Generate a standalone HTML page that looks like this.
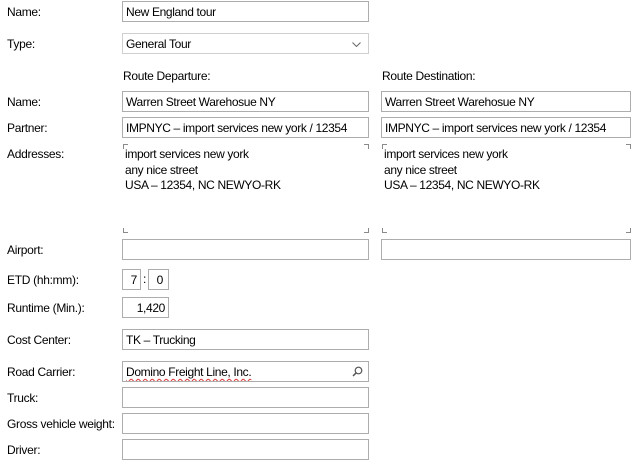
<!DOCTYPE html>
<html><head><meta charset="utf-8"><style>
html,body{margin:0;padding:0;background:#fff;width:640px;height:466px;overflow:hidden;font-family:"Liberation Sans",sans-serif;font-size:12px;color:#000}
.l{position:absolute;left:7px;font-size:12px;letter-spacing:-0.3px}
.i{position:absolute;box-sizing:border-box;border:1px solid #adadad;background:#fff;height:21px;padding:3px 3px 0 3px;font-size:12px;white-space:nowrap;overflow:hidden;letter-spacing:-0.35px}
.a{position:absolute;box-sizing:border-box;height:93px;font-size:12px;line-height:15.5px;padding:4px 3px;letter-spacing:-0.35px}
.c{position:absolute;width:4px;height:4px;border-color:#8a8a8a;border-style:solid;border-width:0}
.h{position:absolute;font-size:12px;letter-spacing:-0.3px}
</style></head><body>
<div class="l" style="top:5px">Name:</div>
<div class="i" style="left:122px;top:1px;width:247px">New England tour</div>
<div class="l" style="top:37px">Type:</div>
<div class="i" style="left:122px;top:33px;width:247px;background:#fff;border-color:#cfcfcf">General Tour<svg style="position:absolute;right:7px;top:8px" width="9" height="5"><path d="M0.5 0.5L4.5 4.5L8.5 0.5" fill="none" stroke="#666" stroke-width="1"/></svg></div>
<div class="h" style="left:123px;top:69px">Route Departure:</div>
<div class="h" style="left:382px;top:69px">Route Destination:</div>
<div class="l" style="top:95px">Name:</div>
<div class="i" style="left:122px;top:91px;width:247px">Warren Street Warehosue NY</div>
<div class="i" style="left:381px;top:91px;width:250px">Warren Street Warehosue NY</div>
<div class="l" style="top:121px">Partner:</div>
<div class="i" style="left:122px;top:117px;width:247px">IMPNYC – import services new york / 12354</div>
<div class="i" style="left:381px;top:117px;width:250px">IMPNYC – import services new york / 12354</div>
<div class="l" style="top:147px">Addresses:</div>
<div class="a" style="left:122px;top:143px;width:247px">import services new york<br>any nice street<br>USA – 12354, NC NEWYO-RK</div>
<div class="a" style="left:381px;top:143px;width:250px">import services new york<br>any nice street<br>USA – 12354, NC NEWYO-RK</div>
<div class="c" style="left:123px;top:144px;border-left-width:1px;border-top-width:1px"></div>
<div class="c" style="left:364px;top:144px;border-right-width:1px;border-top-width:1px"></div>
<div class="c" style="left:123px;top:228px;border-left-width:1px;border-bottom-width:1px"></div>
<div class="c" style="left:364px;top:228px;border-right-width:1px;border-bottom-width:1px"></div>
<div class="c" style="left:382px;top:144px;border-left-width:1px;border-top-width:1px"></div>
<div class="c" style="left:626px;top:144px;border-right-width:1px;border-top-width:1px"></div>
<div class="c" style="left:382px;top:228px;border-left-width:1px;border-bottom-width:1px"></div>
<div class="c" style="left:626px;top:228px;border-right-width:1px;border-bottom-width:1px"></div>
<div class="l" style="top:243px">Airport:</div>
<div class="i" style="left:122px;top:239px;width:247px"></div>
<div class="i" style="left:381px;top:239px;width:250px"></div>
<div class="l" style="top:273px">ETD (hh:mm):</div>
<div class="i" style="left:122px;top:269px;width:19px;text-align:right">7</div>
<div style="position:absolute;left:143px;top:272px;font-size:12px">:</div>
<div class="i" style="left:148px;top:269px;width:21px;text-align:right;padding-right:5px">0</div>
<div class="l" style="top:301px">Runtime (Min.):</div>
<div class="i" style="left:122px;top:297px;width:47px;text-align:right">1,420</div>
<div class="l" style="top:333px">Cost Center:</div>
<div class="i" style="left:122px;top:329px;width:247px">TK – Trucking</div>
<div class="l" style="top:365px">Road Carrier:</div>
<div class="i" style="left:122px;top:361px;width:247px"><span style="text-decoration:underline wavy #d33;text-decoration-thickness:1px;text-underline-offset:2px">Domino Freight Line, Inc.</span><svg style="position:absolute;right:5px;top:4px" width="11" height="11"><circle cx="6.5" cy="4.5" r="3.3" fill="none" stroke="#555" stroke-width="1.2"/><path d="M4.2 6.8L1 10" stroke="#555" stroke-width="1.5"/></svg></div>
<div class="l" style="top:391px">Truck:</div>
<div class="i" style="left:122px;top:387px;width:247px"></div>
<div class="l" style="top:417px">Gross vehicle weight:</div>
<div class="i" style="left:122px;top:413px;width:247px"></div>
<div class="l" style="top:443px">Driver:</div>
<div class="i" style="left:122px;top:439px;width:247px"></div>
</body></html>
